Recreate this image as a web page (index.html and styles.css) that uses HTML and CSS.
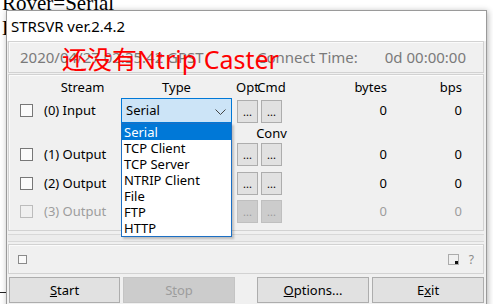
FILE: index.html
```html
<!DOCTYPE html>
<html lang="en">
<head>
    <meta charset="UTF-8">
    <meta name="viewport" content="width=device-width, initial-scale=1.0">
    <title>STRSVR ver.2.4.2</title>
    <link rel="stylesheet" href="styles.css">
</head>
<body>
    <div class="desk">
        <div class="desk-text">
            <p>Rover=Serial</p>
            <p>E</p>
        </div>
        <div class="desk-rule"></div>

        <div class="window">
            <div class="titlebar">STRSVR ver.2.4.2</div>
            <div class="client">
                <div class="panel status">
                    <span class="time">2020/04/27 02:35:42 GPST</span>
                    <span class="conn-label">Connect Time:</span>
                    <span class="conn-val">0d 00:00:00</span>
                </div>

                <div class="panel streams">
                    <!-- header -->
                    <div class="head col-name">Stream</div>
                    <div class="head col-type">Type</div>
                    <div class="head col-opt">Opt</div>
                    <div class="head col-cmd">Cmd</div>
                    <div class="head col-num">bytes</div>
                    <div class="head col-num">bps</div>

                    <!-- (0) input -->
                    <span class="check"></span>
                    <div class="name">(0) Input</div>
                    <div class="combo open">
                        <span>Serial</span>
                        <svg class="chev" width="11" height="6" viewBox="0 0 11 6"><path d="M0.5 0.5 L5.5 5.5 L10.5 0.5" fill="none" stroke="#444" stroke-width="1"/></svg>
                        <ul class="droplist">
                            <li class="sel">Serial</li>
                            <li>TCP Client</li>
                            <li>TCP Server</li>
                            <li>NTRIP Client</li>
                            <li>File</li>
                            <li>FTP</li>
                            <li>HTTP</li>
                        </ul>
                    </div>
                    <button class="dots first">...</button>
                    <button class="dots first">...</button>
                    <div class="num">0</div>
                    <div class="num">0</div>

                    <!-- conv label row -->
                    <div class="conv">Conv</div>

                    <!-- (1) output -->
                    <span class="check"></span>
                    <div class="name">(1) Output</div>
                    <div class="combo"><span>TCP Server</span></div>
                    <button class="dots">...</button>
                    <button class="dots">...</button>
                    <div class="num">0</div>
                    <div class="num">0</div>

                    <!-- (2) output -->
                    <span class="check"></span>
                    <div class="name">(2) Output</div>
                    <div class="combo"><span>File</span></div>
                    <button class="dots">...</button>
                    <button class="dots">...</button>
                    <div class="num">0</div>
                    <div class="num">0</div>

                    <!-- (3) output, disabled -->
                    <span class="check off"></span>
                    <div class="name off">(3) Output</div>
                    <div class="combo off"><span></span></div>
                    <button class="dots" disabled>...</button>
                    <button class="dots" disabled>...</button>
                    <div class="num off">0</div>
                    <div class="num off">0</div>
                </div>

                <div class="band"></div>

                <div class="panel msg">
                    <span class="small-check"></span>
                    <span class="msg-icons">
                        <svg width="11" height="11" viewBox="0 0 11 11"><rect x="0.5" y="0.5" width="10" height="10" fill="none" stroke="#666" stroke-dasharray="1 1"/><rect x="7" y="7" width="3" height="3" fill="#111"/></svg>
                        <span class="help">?</span>
                    </span>
                </div>

                <div class="actions">
                    <button class="btn"><u>S</u>tart</button>
                    <button class="btn" disabled>S<u>t</u>op</button>
                    <button class="btn push"><u>O</u>ptions...</button>
                    <button class="btn">E<u>x</u>it</button>
                </div>
            </div>

            <div class="note">还没有Ntrip Caster</div>
        </div>
    </div>
</body>
</html>
```

FILE: styles.css
```css
body {
    margin: 0;
    background: #fff;
    font-family: "Noto Sans", sans-serif;
    font-size: 13px;
    color: #000;
}
.desk {
    position: relative;
    width: 493px;
    height: 304px;
    overflow: hidden;
}
.desk-text {
    position: absolute;
    left: 2px;
    top: -9px;
    font-family: "Liberation Serif", serif;
    font-size: 21px;
    line-height: 25px;
}
.desk-text p {
    margin: 0;
}
.desk-rule {
    position: absolute;
    left: 0;
    top: 292px;
    width: 6px;
    height: 1px;
    background: #222;
}

/* window */
.window {
    position: absolute;
    left: 6px;
    top: 10px;
    width: 479px;
    height: 300px;
    border: 1px solid #9a9a9a;
    background: #f0f0f0;
    box-shadow: 1px 1px 6px rgba(0, 0, 0, 0.3);
}
.titlebar {
    height: 30px;
    line-height: 30px;
    padding-left: 4px;
    background: #fff;
    font-size: 15px;
}
.client {
    padding: 0 2px 0 1px;
}
.panel {
    border: 1px solid #d2d2d2;
    box-shadow: inset 1px 1px 0 #fbfbfb;
}

/* status line */
.status {
    height: 30px;
    display: flex;
    align-items: center;
    padding: 0 17px 0 11px;
    font-size: 15px;
    color: #7a7a7a;
}
.status .time {
    width: 237px;
}
.status .conn-val {
    margin-left: auto;
}

/* stream table */
.streams {
    margin-top: 1px;
    padding: 4px 0 7px 11px;
    display: grid;
    grid-template-columns: 24px 77px 116px 24px 21px 105px 75px;
    grid-template-rows: 20px 25px 19px 29px 28px 23px;
    align-items: start;
}
.head {
    line-height: 16px;
}
.col-name {
    grid-column: 2;
    display: flex;
    justify-content: center;
}
.col-type {
    width: 111px;
    display: flex;
    justify-content: center;
}
.col-opt, .col-cmd {
    width: 21px;
    display: flex;
    justify-content: center;
}
.col-num, .num {
    justify-self: end;
}
.check {
    grid-column: 1;
    width: 13px;
    height: 13px;
    box-sizing: border-box;
    margin-top: 5px;
    border: 1px solid #777;
    background: #fbfbfb;
}
.name, .num {
    line-height: 23px;
}
.combo {
    position: relative;
    width: 111px;
    height: 23px;
    box-sizing: border-box;
    border: 1px solid #adadad;
    background: #e5e5e5;
    padding-left: 4px;
    line-height: 21px;
}
.combo.open {
    height: 25px;
    line-height: 23px;
    border-color: #0078d7;
    background: #cce4f7;
    margin-top: -1px;
}
.chev {
    position: absolute;
    right: 5px;
    top: 10px;
}
.droplist {
    position: absolute;
    z-index: 5;
    left: -1px;
    top: calc(100% + 1px);
    width: 111px;
    box-sizing: border-box;
    margin: 0;
    padding: 0;
    list-style: none;
    border: 1px solid #1c6fc4;
    background: #fff;
    box-shadow: 2px 2px 2px rgba(0, 0, 0, 0.2);
}
.droplist li {
    height: 16px;
    line-height: 16px;
    padding-left: 2px;
}
.droplist .sel {
    background: #0078d7;
    color: #fff;
}
.dots {
    width: 21px;
    height: 23px;
    padding: 0;
    border: 1px solid #adadad;
    background: #e1e1e1;
    font-family: "Noto Sans", sans-serif;
    font-size: 11px;
    line-height: 21px;
    color: #000;
}
.dots.first {
    margin-top: 1px;
}
.dots:disabled {
    background: #cccccc;
    border-color: #bfbfbf;
    color: #9a9a9a;
}
.conv {
    grid-column: 5;
    display: flex;
    justify-content: center;
    line-height: 18px;
}
.off {
    color: #9d9d9d;
}
.check.off {
    border-color: #bcbcbc;
    background: #f0f0f0;
}

/* band + message line */
.band {
    margin-top: 3px;
    height: 6px;
    border-top: 1px solid #d8d8d8;
    border-bottom: 1px solid #d8d8d8;
    background: #ececec;
}
.msg {
    margin-top: 2px;
    height: 28px;
    display: flex;
    align-items: center;
    padding: 0 9px;
}
.small-check {
    width: 9px;
    height: 9px;
    box-sizing: border-box;
    border: 1px solid #8a8a8a;
    background: #fafafa;
}
.msg-icons {
    margin-left: auto;
    display: flex;
    align-items: center;
    gap: 10px;
}
.help {
    color: #8a8a8a;
    font-size: 12px;
}

/* buttons */
.actions {
    margin-top: 3px;
    padding-left: 1px;
    display: flex;
    gap: 3px;
}
.btn {
    width: 112px;
    height: 26px;
    padding: 0;
    border: 1px solid #adadad;
    background: #e1e1e1;
    font-family: "Noto Sans", sans-serif;
    font-size: 13px;
    color: #000;
}
.btn:first-child {
    width: 111px;
}
.btn:disabled {
    background: #cccccc;
    border-color: #c4c4c4;
    color: #9d9d9d;
}
.push {
    margin-left: auto;
}

/* red annotation over the window */
.note {
    position: absolute;
    left: 55px;
    top: 33px;
    font-family: "Noto Sans", "Noto Sans CJK SC", sans-serif;
    font-size: 25px;
    line-height: 30px;
    color: #ff0000;
}
```
